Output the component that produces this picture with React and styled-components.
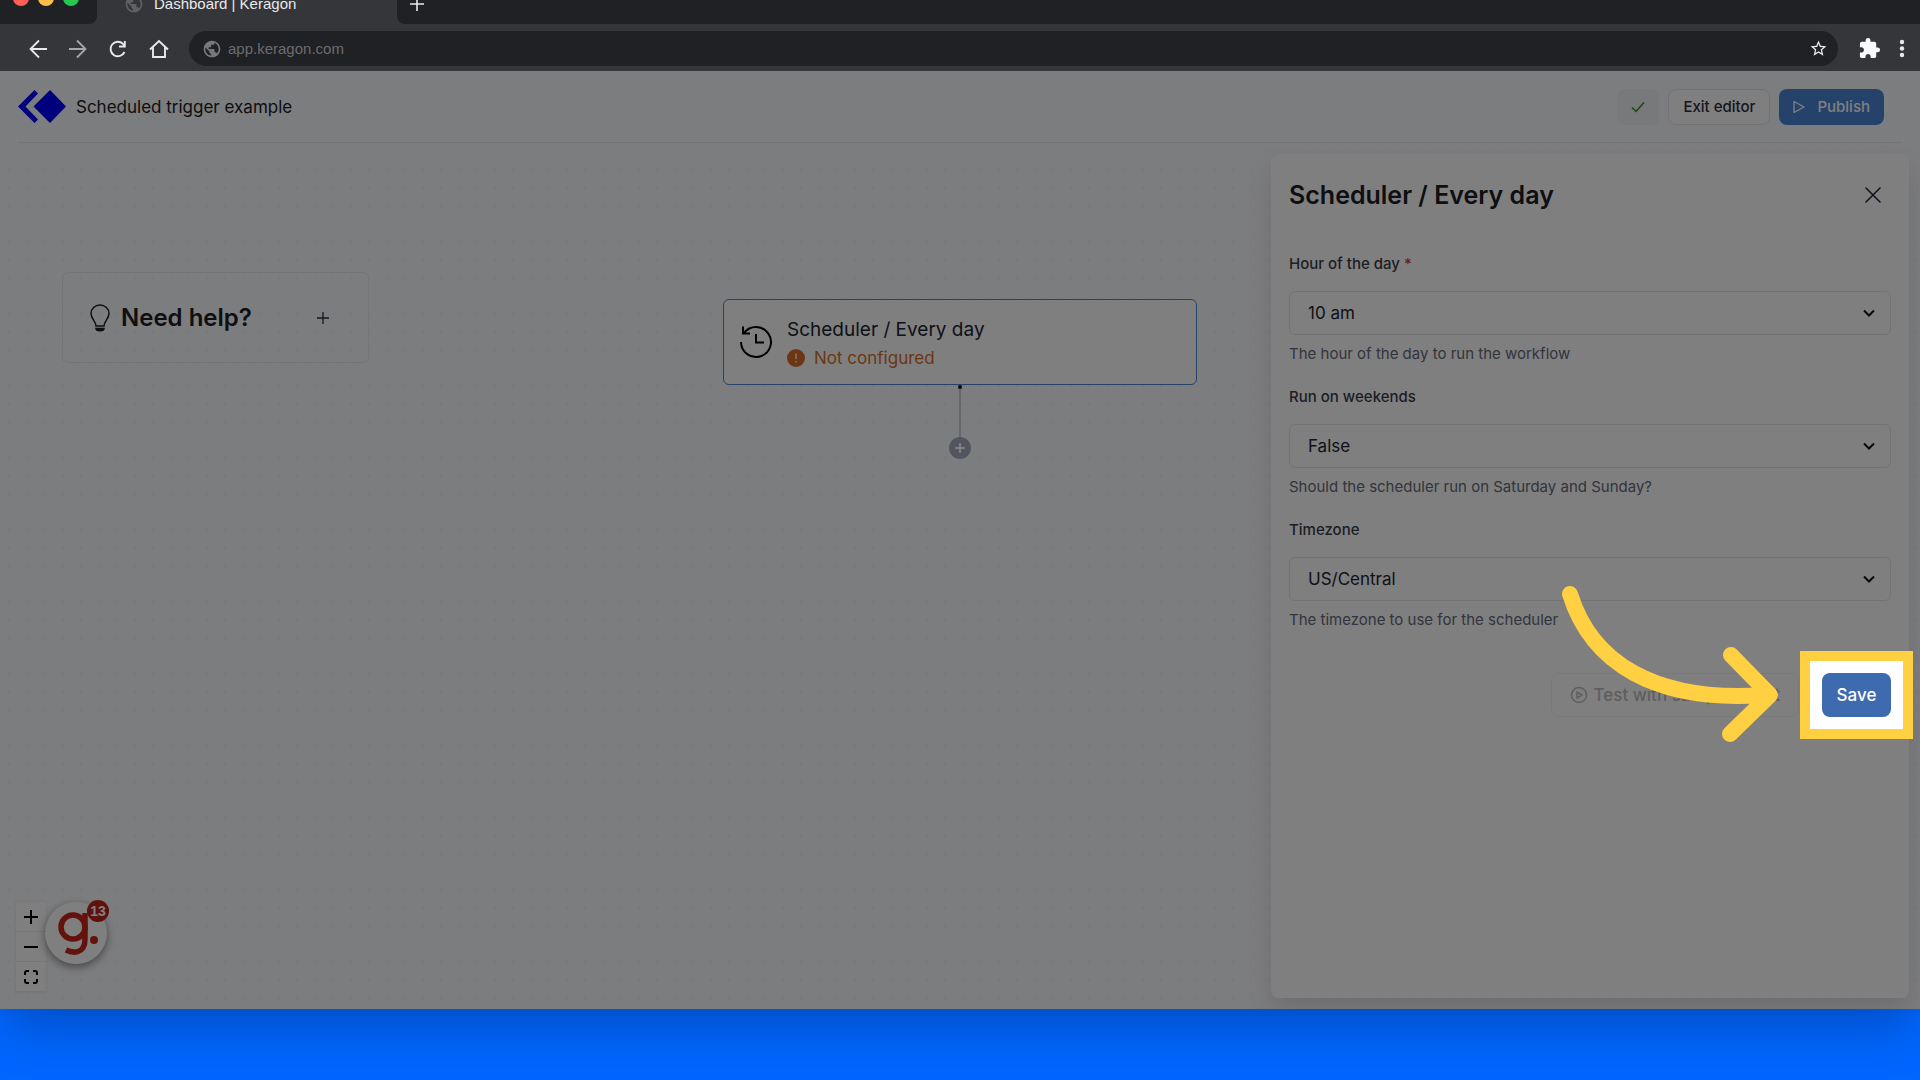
import React, { useState } from "react";
import styled, { createGlobalStyle } from "styled-components";

const FIELDS = [
  { id: "hour", label: "Hour of the day", required: true, options: ["10 am"], help: "The hour of the day to run the workflow" },
  { id: "weekends", label: "Run on weekends", options: ["False", "True"], help: "Should the scheduler run on Saturday and Sunday?" },
  { id: "timezone", label: "Timezone", options: ["US/Central"], help: "The timezone to use for the scheduler" },
];

function GlobeIcon() {
  return (
    <svg viewBox="0 0 24 24" fill="currentColor">
      <path d="M12 2C6.48 2 2 6.48 2 12s4.48 10 10 10 10-4.48 10-10S17.52 2 12 2zm-1 17.93c-3.95-.49-7-3.85-7-7.93 0-.62.08-1.21.21-1.79L9 15v1c0 1.1.9 2 2 2v1.93zm6.9-2.54c-.26-.81-1-1.39-1.9-1.39h-1v-3c0-.55-.45-1-1-1H8v-2h2c.55 0 1-.45 1-1V7h2c1.1 0 2-.9 2-2v-.41c2.93 1.19 5 4.06 5 7.41 0 2.08-.8 3.97-2.1 5.39z" />
    </svg>
  );
}

function BrowserChrome() {
  return (
    <Chrome>
      <TabStrip>
        <WindowControls>
          <Light $color="#ff5f57" />
          <Light $color="#febc4a" />
          <Light $color="#28c850" />
        </WindowControls>
        <Tab>
          <GlobeIcon />
          <span>Dashboard | Keragon</span>
        </Tab>
        <TabRest>
          <NewTab aria-label="New tab">
            <svg viewBox="0 0 16 16" stroke="currentColor" strokeWidth="1.6">
              <path d="M8 1v14M1 8h14" />
            </svg>
          </NewTab>
        </TabRest>
      </TabStrip>
      <NavBar>
        <NavButton aria-label="Back">
          <svg viewBox="0 0 24 24" fill="none" stroke="currentColor" strokeWidth="1.8">
            <path d="M21 12H4.500M13 3.500 4.500 12 13 20.500" />
          </svg>
        </NavButton>
        <NavButton aria-label="Forward" $muted>
          <svg viewBox="0 0 24 24" fill="none" stroke="currentColor" strokeWidth="1.8">
            <path d="M3 12H19.500M11 3.500 19.500 12 11 20.500" />
          </svg>
        </NavButton>
        <NavButton aria-label="Reload">
          <svg viewBox="0 0 24 24" fill="none" stroke="currentColor" strokeWidth="1.9">
            <path d="M18.500 15A7.300 7.300 0 1 1 17 6.800L18.800 9M18.800 4V9.500H13" />
          </svg>
        </NavButton>
        <NavButton aria-label="Home">
          <svg viewBox="0 0 24 24" fill="none" stroke="currentColor" strokeWidth="1.9">
            <path d="M4 12.500 13 4l9 8.500M7 10.500V20h12v-9.500" />
          </svg>
        </NavButton>
        <AddressBar>
          <GlobeIcon />
          <AddressInput aria-label="Address" defaultValue="app.keragon.com" />
          <StarButton aria-label="Bookmark">
            <svg viewBox="0 0 24 24" fill="currentColor">
              <path d="M22 9.24l-7.19-.62L12 2 9.19 8.63 2 9.24l5.46 4.73L5.820 21 12 17.270 18.180 21l-1.630-7.030L22 9.240zM12 15.400l-3.760 2.270 1-4.280-3.320-2.880 4.380-.38L12 6.100l1.710 4.040 4.380.38-3.320 2.880 1 4.280L12 15.400z" />
            </svg>
          </StarButton>
        </AddressBar>
        <ExtensionButton aria-label="Extensions">
          <svg viewBox="0 0 24 24" fill="currentColor">
            <path d="M20.500 11H19V7c0-1.100-.9-2-2-2h-4V3.500a2.500 2.500 0 0 0-5 0V5H4c-1.100 0-1.990.9-1.990 2v3.800H3.500c1.490 0 2.700 1.210 2.700 2.700s-1.210 2.700-2.700 2.700H2V20c0 1.100.9 2 2 2h3.800v-1.500c0-1.490 1.210-2.700 2.700-2.700s2.700 1.210 2.700 2.700V22H17c1.100 0 2-.9 2-2v-4h1.500a2.500 2.500 0 0 0 0-5z" />
          </svg>
        </ExtensionButton>
        <MenuButton aria-label="Menu">
          <svg viewBox="0 0 6 20" fill="currentColor">
            <circle cx="3" cy="3" r="2.200" />
            <circle cx="3" cy="9.500" r="2.200" />
            <circle cx="3" cy="16" r="2.200" />
          </svg>
        </MenuButton>
      </NavBar>
    </Chrome>
  );
}

function EditorHeader() {
  return (
    <Header>
      <Logo viewBox="0 0 48 34" fill="#0000ff">
        <path d="M32 0 48 16.500 32 33 15.500 16.500z" />
        <path d="M16.500 0 20 3.500 7.500 16.500 20 29.500 16.500 33 0 16.500z" />
      </Logo>
      <WorkflowName>Scheduled trigger example</WorkflowName>
      <SavedState>
        <svg viewBox="0 0 14 12" fill="none" stroke="currentColor" strokeWidth="1.500">
          <path d="M1 6.500 5 10.500 13 1.500" />
        </svg>
      </SavedState>
      <ExitButton>Exit editor</ExitButton>
      <PublishButton>
        <svg viewBox="0 0 12 14" fill="none" stroke="currentColor" strokeWidth="1.300" strokeLinejoin="round">
          <path d="M1 1.500 11 7 1 12.500z" />
        </svg>
        Publish
      </PublishButton>
    </Header>
  );
}

function Field({ field }) {
  const [value, setValue] = useState(field.options[0]);

  return (
    <FieldGroup>
      <Label htmlFor={field.id}>
        {field.label}
        {field.required && <Required> *</Required>}
      </Label>
      <SelectWrap>
        <Select id={field.id} value={value} onChange={(e) => setValue(e.target.value)}>
          {field.options.map((option) => (
            <option key={option}>{option}</option>
          ))}
        </Select>
        <svg viewBox="0 0 12 8" fill="none" stroke="currentColor" strokeWidth="2">
          <path d="M1 1.500 6 6.500 11 1.500" />
        </svg>
      </SelectWrap>
      <Help>{field.help}</Help>
    </FieldGroup>
  );
}

function SettingsPanel() {
  return (
    <Panel>
      <PanelHead>
        <PanelTitle>Scheduler / Every day</PanelTitle>
        <CloseButton aria-label="Close">
          <svg viewBox="0 0 16 16" stroke="currentColor" strokeWidth="1.500" strokeLinecap="round">
            <path d="M1 1 15 15M15 1 1 15" />
          </svg>
        </CloseButton>
      </PanelHead>
      {FIELDS.map((field) => (
        <Field key={field.id} field={field} />
      ))}
      <Actions>
        <TestButton disabled>
          <svg viewBox="0 0 18 18" fill="none" stroke="currentColor" strokeWidth="1.500" strokeLinejoin="round">
            <circle cx="9" cy="9" r="7.500" />
            <path d="M7 6 12 9 7 12z" />
          </svg>
          Test with sample event
        </TestButton>
        <SaveSpot>
          <SaveButton>Save</SaveButton>
          <Spotlight />
          <Arrow viewBox="0 0 220 160" fill="none" stroke="#ffd041" strokeWidth="16" strokeLinecap="round" strokeLinejoin="round">
            <path d="M12 9C33 77 96 118 207 110" />
            <path d="M173 70 212 110 172 149" />
          </Arrow>
        </SaveSpot>
      </Actions>
    </Panel>
  );
}

export default function App() {
  return (
    <Page>
      <GlobalStyle />
      <BrowserWindow>
        <BrowserChrome />
        <Editor>
          <EditorHeader />
          <Canvas>
            <HelpCard>
              <svg viewBox="0 0 20 28" fill="none" stroke="currentColor" strokeWidth="1.500">
                <path d="M6 22C6 17 1 15 1 9.500a9 8.500 0 0 1 18 0C19 15 14 17 14 22z" />
                <path d="M6 24.500h8c0 3-8 3-8 0z" fill="currentColor" />
              </svg>
              <HelpTitle>Need help?</HelpTitle>
              <HelpToggle aria-label="Expand help">
                <svg viewBox="0 0 12 12" stroke="currentColor" strokeWidth="1.300">
                  <path d="M6 0v12M0 6h12" />
                </svg>
              </HelpToggle>
            </HelpCard>

            <NodeStack>
              <Node>
                <svg viewBox="0 0 34 34" fill="none" stroke="#000" strokeWidth="2">
                  <path d="M2 17A15 15 0 1 0 5 8" />
                  <path d="M4 1.500V8.500H11M17 9V17.500H25" />
                </svg>
                <NodeText>
                  <NodeTitle>Scheduler / Every day</NodeTitle>
                  <NodeStatus>
                    <svg viewBox="0 0 18 18">
                      <circle cx="9" cy="9" r="9" fill="currentColor" />
                      <path d="M9 4.500V10M9 12V13.500" stroke="#ffe9d6" strokeWidth="1.600" />
                    </svg>
                    Not configured
                  </NodeStatus>
                </NodeText>
              </Node>
              <Handle />
              <Edge />
              <AddStep aria-label="Add step">
                <svg viewBox="0 0 10 10" stroke="currentColor" strokeWidth="2" strokeLinecap="round">
                  <path d="M5 1v8M1 5h8" />
                </svg>
              </AddStep>
            </NodeStack>

            <ZoomControls>
              <ZoomButton aria-label="Zoom in">
                <svg viewBox="0 0 14 14" stroke="currentColor" strokeWidth="2">
                  <path d="M7 0v14M0 7h14" />
                </svg>
              </ZoomButton>
              <ZoomButton aria-label="Zoom out">
                <svg viewBox="0 0 14 14" stroke="currentColor" strokeWidth="2">
                  <path d="M0 7h14" />
                </svg>
              </ZoomButton>
              <ZoomButton aria-label="Fit view">
                <svg viewBox="0 0 14 14" fill="none" stroke="currentColor" strokeWidth="2">
                  <path d="M1 5V3Q1 1 3 1H5M9 1H11Q13 1 13 3V5M13 9V11Q13 13 11 13H9M5 13H3Q1 13 1 11V9" />
                </svg>
              </ZoomButton>
            </ZoomControls>

            <Guide aria-label="Guide">
              <svg viewBox="0 0 62 62" fill="none" stroke="#c9241a" strokeWidth="5.500">
                <circle cx="28" cy="25" r="12" />
                <path d="M40 11V37C40 53 27 51 21 48" />
                <circle cx="49" cy="38" r="4" fill="#c9241a" stroke="none" />
              </svg>
              <GuideCount>13</GuideCount>
            </Guide>

            <SettingsPanel />
          </Canvas>
        </Editor>
      </BrowserWindow>
    </Page>
  );
}

const GlobalStyle = createGlobalStyle`
  * { box-sizing: border-box; }
  body { margin: 0; background: #0066ff; font-family: "Inter", sans-serif; }
  button, input, select { font-family: inherit; margin: 0; }
  button { cursor: pointer; padding: 0; border: none; background: none; }
  svg { display: block; flex-shrink: 0; }
`;

const Page = styled.div`
  min-height: 100vh; padding-bottom: 71px;
  display: flex; flex-direction: column;
  background: #0066ff; overflow: hidden;
`;

const BrowserWindow = styled.div`
  flex: 1; display: flex; flex-direction: column;
  box-shadow: 0 24px 48px -8px rgba(0,0,0,0.25);
`;

const Chrome = styled.div`
  background: #35363a; color: #e8e9eb;
  font-family: "Liberation Sans", sans-serif;
`;

const TabStrip = styled.div`
  display: flex; height: 24px;
`;

const WindowControls = styled.div`
  width: 97px; padding-left: 13px;
  display: flex; gap: 9px;
  background: #202124; border-bottom-right-radius: 8px;
`;

const Light = styled.span`
  width: 16px; height: 16px; margin-top: -10px;
  border-radius: 50%;
  background: ${({ $color }) => $color};
`;

const Tab = styled.div`
  width: 300px; height: 8px; padding-left: 27px;
  display: flex; align-items: center; gap: 10px;
  font-size: 15px; line-height: 20px;
  svg { width: 20px; height: 20px; color: #5f6165; }
`;

const TabRest = styled.div`
  flex: 1; height: 24px; padding-left: 12px;
  background: #202124; border-bottom-left-radius: 8px;
`;

const NewTab = styled.button`
  color: #e8e9eb; height: 8px;
  display: flex; align-items: center;
  svg { width: 16px; height: 16px; }
`;

const NavBar = styled.div`
  height: 47px; padding: 2px 15px 0 26px;
  display: flex; align-items: center;
`;

const NavButton = styled.button`
  width: 40px; height: 40px;
  color: ${({ $muted }) => ($muted ? "#a5a7aa" : "#e8e9eb")};
  svg { width: 24px; height: 24px; }
`;

const AddressBar = styled.div`
  flex: 1; height: 35px; padding: 0 10px 0 13px; margin-left: 3px;
  display: flex; align-items: center; gap: 6px;
  background: #202124; border-radius: 18px; color: #77797d;
  > svg { width: 20px; height: 20px; }
`;

const AddressInput = styled.input`
  flex: 1; min-width: 0; padding: 0;
  border: none; outline: none; background: none;
  color: #6a6c70; font-size: 15px;
`;

const StarButton = styled.button`
  color: #e8eaed;
  svg { width: 19px; height: 19px; }
`;

const ExtensionButton = styled.button`
  margin-left: 20px; color: #f8f9fa;
  svg { width: 23px; height: 23px; }
`;

const MenuButton = styled.button`
  margin-left: 18px; color: #e8e9eb;
  svg { width: 6px; height: 20px; }
`;

const Editor = styled.div`
  flex: 1; display: flex; flex-direction: column;
  position: relative; overflow: hidden;
  background: #f9fafe;
`;

const Header = styled.header`
  height: 72px; margin: 0 18px; padding-right: 18px;
  display: flex; align-items: center;
  border-bottom: 1px solid #e8e9ee;
`;

const Logo = styled.svg`
  width: 48px; height: 34px;
`;

const WorkflowName = styled.h1`
  flex: 1; margin: 0 0 0 10px;
  font-size: 17px; font-weight: 400; line-height: 24px; color: #1a1b22;
`;

const SavedState = styled.span`
  width: 42px; height: 36px; border-radius: 8px;
  display: flex; align-items: center; justify-content: center;
  background: #f1f2f4; color: #348a24;
  svg { width: 14px; height: 12px; }
`;

const ExitButton = styled.button`
  height: 36px; padding: 0 14px; margin: 0 9px;
  border: 1px solid #e4e5ee; border-radius: 8px; background: #fff;
  font-size: 15px; font-weight: 500; color: #2a2c40;
`;

const PublishButton = styled.button`
  height: 36px; padding: 0 14px; border-radius: 8px;
  display: flex; align-items: center; gap: 12px;
  background: #4a84d6; color: #fff;
  font-size: 15px; font-weight: 500;
  svg { width: 12px; height: 14px; }
`;

const Canvas = styled.main`
  flex: 1; position: relative;
  display: flex; justify-content: flex-end;
  padding: 11px;
  background-image: radial-gradient(circle, #f0f1f5 1px, transparent 1px);
  background-size: 18px 18px;
`;

const HelpCard = styled.section`
  position: absolute; top: 129px; left: 62px;
  width: 307px; height: 91px; padding: 0 39px 0 27px;
  display: flex; align-items: center; gap: 11px;
  border: 1px solid #eaebef; border-radius: 6px; color: #1c1d26;
  > svg { width: 20px; height: 28px; }
`;

const HelpTitle = styled.h2`
  flex: 1; margin: 0;
  font-size: 24px; font-weight: 600; line-height: 32px;
`;

const HelpToggle = styled.button`
  color: #2a2c40;
  svg { width: 12px; height: 12px; }
`;

const NodeStack = styled.div`
  position: absolute; top: 156px; left: 50%; transform: translateX(-50%);
  display: flex; flex-direction: column; align-items: center;
`;

const Node = styled.div`
  width: 474px; height: 86px; padding: 0 15px;
  display: flex; align-items: center; gap: 14px;
  background: #fff; border: 1px solid #4e86d8; border-radius: 6px;
  > svg { width: 34px; height: 34px; }
`;

const NodeText = styled.div`
  padding-top: 4px;
`;

const NodeTitle = styled.div`
  font-size: 19px; line-height: 28px; color: #22232e;
`;

const NodeStatus = styled.div`
  display: flex; align-items: center; gap: 9px;
  font-size: 17px; line-height: 28px; color: #d96d2b;
  svg { width: 18px; height: 18px; }
`;

const Handle = styled.span`
  width: 4px; height: 4px; border-radius: 50%; background: #10111c;
`;

const Edge = styled.span`
  width: 2px; height: 48px; background: #cfcfd2;
`;

const AddStep = styled.button`
  width: 22px; height: 22px; border-radius: 50%;
  display: flex; align-items: center; justify-content: center;
  background: #a6acbe; color: #fff;
  svg { width: 10px; height: 10px; }
`;

const ZoomControls = styled.div`
  position: absolute; left: 16px; bottom: 17px;
  display: flex; flex-direction: column;
  box-shadow: 0 0 2px 1px rgba(0,0,0,0.05);
`;

const ZoomButton = styled.button`
  width: 30px; height: 30px;
  display: flex; align-items: center; justify-content: center;
  background: #fefefe; color: #000;
  border-bottom: 1px solid #eee;
  svg { width: 14px; height: 14px; }
`;

const Guide = styled.button`
  position: absolute; left: 45px; bottom: 45px;
  width: 62px; height: 62px; border-radius: 50%;
  background: #fff; box-shadow: 0 3px 8px rgba(0,0,0,0.45);
  svg { width: 62px; height: 62px; }
`;

const GuideCount = styled.span`
  position: absolute; top: -2px; right: -2px;
  width: 22px; height: 22px; border-radius: 50%;
  background: #bd231b; color: #fff;
  font-family: "Liberation Sans", sans-serif;
  font-size: 14px; font-weight: 700; line-height: 22px; text-align: center;
`;

const Panel = styled.aside`
  width: 638px; max-width: 50%; padding: 24px 18px;
  position: relative; z-index: 2;
  display: flex; flex-direction: column;
  background: #fff; border-radius: 8px;
  box-shadow: 0 12px 24px rgba(0,0,0,0.12);
`;

const PanelHead = styled.div`
  display: flex; align-items: center; justify-content: space-between;
  padding-right: 10px; margin-bottom: 40px;
`;

const PanelTitle = styled.h2`
  margin: 0; font-size: 25px; font-weight: 600; line-height: 34px; color: #1c1d26;
`;

const CloseButton = styled.button`
  color: #20223a;
  svg { width: 16px; height: 16px; }
`;

const FieldGroup = styled.div`
  display: flex; flex-direction: column;
  margin-bottom: 19px;
`;

const Label = styled.label`
  margin-bottom: 15px;
  font-size: 15px; font-weight: 500; line-height: 24px; color: #3a3d4c;
`;

const Required = styled.span`
  color: #d63b32;
`;

const SelectWrap = styled.div`
  display: flex; align-items: center; position: relative;
  svg {
    position: absolute; right: 16px; pointer-events: none;
    width: 12px; height: 8px; color: #10111c;
  }
`;

const Select = styled.select`
  width: 100%; height: 44px; padding: 0 40px 0 18px;
  appearance: none; background: #fff;
  border: 1px solid #e6e7ea; border-radius: 6px;
  font-size: 17px; color: #22232e;
`;

const Help = styled.p`
  margin: 7px 0 0;
  font-size: 15px; line-height: 24px; color: #656a7b;
`;

const Actions = styled.div`
  display: flex; justify-content: flex-end; gap: 23px;
  margin-top: 22px;
`;

const TestButton = styled.button`
  height: 44px; padding: 0 18px;
  display: flex; align-items: center; gap: 6px;
  border: 1px solid #f3f3f3; border-radius: 8px; background: #fff;
  font-size: 17px; font-weight: 500; color: #bcbcbf;
  svg { width: 18px; height: 18px; }
`;

const SaveSpot = styled.div`
  position: relative;
`;

const SaveButton = styled.button`
  min-width: 69px; height: 44px; padding: 0 12px; border-radius: 8px;
  background: #3e6bb0; color: #fff;
  font-size: 17px; font-weight: 500;
`;

/* dims the whole editor except for the framed button */
const Spotlight = styled.div`
  position: absolute; inset: -22px;
  border: 10px solid #ffd041; pointer-events: none;
  box-shadow: 0 0 0 4000px rgba(0,0,0,0.5);
`;

const Arrow = styled.svg`
  position: absolute; right: 113px; top: -88px;
  width: 220px; height: 160px; pointer-events: none;
`;
